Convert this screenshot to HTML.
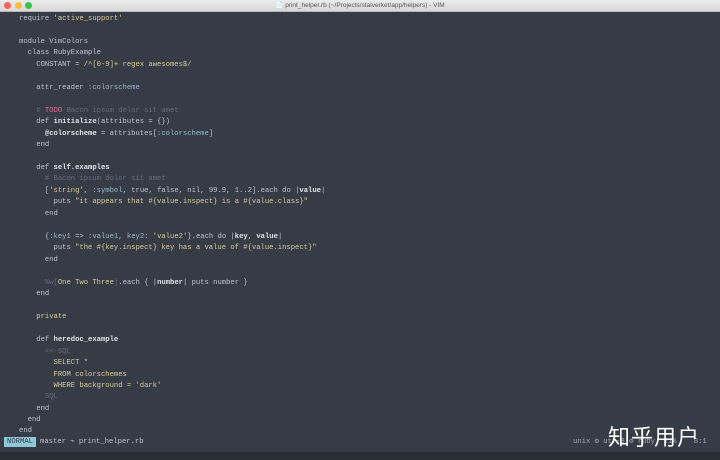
<!DOCTYPE html>
<html><head><meta charset="utf-8"><style>
html,body{margin:0;padding:0}
body{width:720px;height:460px;background:#363b46;position:relative;overflow:hidden;font-family:"Liberation Mono",monospace;font-size:7.2px;color:#bfc4ce}
#tb{position:absolute;left:0;top:0;width:720px;height:11px;background:linear-gradient(#ececec,#d8d8d8);border-bottom:1px solid #b8b8b8}
.dot{position:absolute;top:2px;width:7px;height:7px;border-radius:50%}
#title{position:absolute;left:0;width:720px;top:1px;text-align:center;font-family:"Liberation Sans",sans-serif;font-size:6.5px;color:#555}
.l{position:absolute;left:19px;white-space:pre;line-height:11px}
.s{color:#d8cc98}.y{color:#9ab9d0}.c{color:#646c79}.t{color:#e0709a}.b{font-weight:bold;color:#dfe2e8}
#nm{position:absolute;left:4px;top:437px;width:32px;height:10px;background:#8fc9d8;color:#2c3a44;line-height:10px;text-align:center}
#bot{position:absolute;left:0;top:452px;width:720px;height:8px;background:#2a2e35}
#zh{position:absolute;left:608px;top:420px;font-family:"Noto Sans CJK SC",sans-serif;font-size:22px;color:#fff;letter-spacing:1px}
</style></head><body>
<div id="tb"><div class="dot" style="left:4px;background:#fc605c"></div><div class="dot" style="left:15px;background:#fdbc40"></div><div class="dot" style="left:25px;background:#34c84a"></div>
<div id="title">📄 print_helper.rb (~/Projects/stalverket/app/helpers) - VIM</div></div>
<div class="l" style="top:14px">require <span class="s">'active_support'</span></div>
<div class="l" style="top:37px">module VimColors</div>
<div class="l" style="top:48px">  class RubyExample</div>
<div class="l" style="top:60px">    CONSTANT = <span class="s">/^[0-9]+ regex awesomes$/</span></div>
<div class="l" style="top:83px">    attr_reader <span class="y">:colorscheme</span></div>
<div class="l" style="top:106px">    <span class="c"># </span><span class="t">TODO</span><span class="c"> Bacon ipsum dolor sit amet</span></div>
<div class="l" style="top:117px">    def <span class="b">initialize</span>(attributes = {})</div>
<div class="l" style="top:129px">      <span class="b">@colorscheme</span> = attributes[<span class="y">:colorscheme</span>]</div>
<div class="l" style="top:140px">    end</div>
<div class="l" style="top:163px">    def <span class="b">self.examples</span></div>
<div class="l" style="top:174px">      <span class="c"># Bacon ipsum dolor sit amet</span></div>
<div class="l" style="top:186px">      [<span class="s">'string'</span>, <span class="y">:symbol</span>, true, false, nil, 99.9, 1..2].each do |<span class="b">value</span>|</div>
<div class="l" style="top:197px">        puts <span class="s">"it appears that #{value.inspect} is a #{value.class}"</span></div>
<div class="l" style="top:209px">      end</div>
<div class="l" style="top:232px">      {<span class="y">:key1</span> =&gt; <span class="y">:value1</span>, <span class="y">key2:</span> <span class="s">'value2'</span>}.each do |<span class="b">key</span>, <span class="b">value</span>|</div>
<div class="l" style="top:243px">        puts <span class="s">"the #{key.inspect} key has a value of #{value.inspect}"</span></div>
<div class="l" style="top:255px">      end</div>
<div class="l" style="top:278px">      <span class="c">%w[</span><span class="s">One Two Three</span><span class="c">]</span>.each { |<span class="b">number</span>| puts number }</div>
<div class="l" style="top:289px">    end</div>
<div class="l" style="top:312px">    <span class="s">private</span></div>
<div class="l" style="top:335px">    def <span class="b">heredoc_example</span></div>
<div class="l" style="top:347px">      <span class="c">&lt;&lt;-SQL</span></div>
<div class="l" style="top:358px">        <span class="s">SELECT *</span></div>
<div class="l" style="top:370px">        <span class="s">FROM colorschemes</span></div>
<div class="l" style="top:381px">        <span class="s">WHERE background = 'dark'</span></div>
<div class="l" style="top:392px">      <span class="c">SQL</span></div>
<div class="l" style="top:404px">    end</div>
<div class="l" style="top:415px">  end</div>
<div class="l" style="top:426px">end</div>
<div id="nm">NORMAL</div>
<div class="l" style="top:437px;left:40px;line-height:10px">master ⌁ print_helper.rb</div>
<div class="l" style="top:437px;left:573px;line-height:10px;color:#aab">unix ⚙ utf-8 ⚙ ruby  21%    8:1</div>
<div id="zh">知乎用户</div>
<div id="bot"></div>
</body></html>
